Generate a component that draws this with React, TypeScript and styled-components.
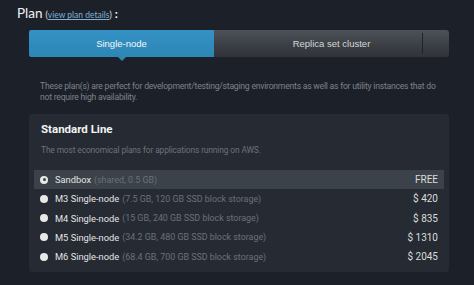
import React from "react";
import styled, { createGlobalStyle } from "styled-components";

const Global = createGlobalStyle`
  html, body { margin: 0; padding: 0; background: #1c2129; }
  body { width: 474px; height: 285px; overflow: hidden; font-family: Roboto, "Liberation Sans", sans-serif; }
`;

const Page = styled.div`
  display: flex;
  flex-direction: column;
  width: 474px;
  height: 285px;
  box-sizing: border-box;
  padding: 5px 25px 0 29px;
  background: #1c2129;
`;

const Header = styled.div`
  display: flex;
  align-items: baseline;
  margin-left: -12px;
  height: 18px;
  color: #f2f2f2;
  font-family: Lato, "Liberation Sans", sans-serif;
`;

const Title = styled.span`
  font-size: 13.5px;
  font-weight: 400;
  margin-right: 3px;
`;

const Small = styled.span`
  font-size: 8.5px;
  color: #e6e6e6;
`;

const Link = styled.a`
  color: #7fb2d6;
  text-decoration: underline;
  font-size: 8.5px;
`;

const Colon = styled.span`
  font-size: 12px;
  margin-left: 3px;
  font-weight: 700;
`;

const Tabs = styled.div`
  display: flex;
  margin-top: 7px;
  height: 27px;
  border-radius: 2px;
`;

const Tab = styled.div<{ $active?: boolean; $grow: number }>`
  position: relative;
  flex: ${(p) => p.$grow} 0 0;
  display: flex;
  align-items: center;
  justify-content: center;
  font-family: "Liberation Sans", Arial, sans-serif;
  font-size: 9.5px;
  color: ${(p) => (p.$active ? "#f4f8fb" : "#d4d6d8")};
  background: ${(p) =>
    p.$active
      ? "linear-gradient(#3592c4, #2c86b6)"
      : "linear-gradient(#4d5259, #3a3e44 60%, #30343a)"};
  border-radius: ${(p) => (p.$active ? "2px 0 0 2px" : "0 3px 3px 0")};
  ${(p) =>
    p.$active
      ? `
    &::after {
      content: "";
      position: absolute;
      left: 50%;
      bottom: -4px;
      margin-left: -4px;
      border-left: 4px solid transparent;
      border-right: 4px solid transparent;
      border-top: 4px solid #2c86b6;
    }`
      : `
    &::after {
      content: "";
      position: absolute;
      right: 26px;
      top: 3px;
      bottom: 3px;
      width: 1px;
      background: #1f2227;
    }`}
`;

const Description = styled.p`
  margin: 24px 0 0 11px;
  font-size: 8.6px;
  letter-spacing: -0.22px;
  line-height: 11px;
  color: #7c828a;
  white-space: nowrap;
`;

const Card = styled.div`
  margin-top: 11px;
  background: #262b33;
  border-radius: 3px;
  padding: 7px 5px 0 5px;
  height: 158px;
  box-sizing: border-box;
`;

const CardTitle = styled.div`
  font-size: 11.5px;
  font-weight: 700;
  color: #f4f4f4;
  margin-left: 7px;
  line-height: 16px;
`;

const CardSubtitle = styled.div`
  font-size: 8.4px;
  letter-spacing: -0.12px;
  color: #6c7279;
  margin: 8px 0 0 7px;
  line-height: 11px;
`;

const List = styled.div`
  margin-top: 14px;
  display: flex;
  flex-direction: column;
`;

const Row = styled.div<{ $selected?: boolean }>`
  display: flex;
  align-items: center;
  height: 19.25px;
  padding: 0 6px 0 6px;
  background: ${(p) => (p.$selected ? "#3b4249" : "transparent")};
  font-size: 9.3px;
`;

const Radio = styled.span<{ $checked?: boolean }>`
  width: 8px;
  height: 8px;
  border-radius: 50%;
  background: #e8e8e8;
  box-sizing: border-box;
  margin-right: 7px;
  display: flex;
  align-items: center;
  justify-content: center;
  &::after {
    content: "";
    width: 3px;
    height: 3px;
    border-radius: 50%;
    background: ${(p) => (p.$checked ? "#3b4249" : "transparent")};
  }
`;

const Name = styled.span`
  color: #e4e4e4;
`;

const Detail = styled.span`
  color: #6b7178;
  margin-left: 3px;
  font-size: 8.9px;
`;

const Price = styled.span`
  margin-left: auto;
  color: #dcdcdc;
  font-size: 10px;
`;

const plans = [
  { name: "Sandbox", detail: "(shared, 0.5 GB)", price: "FREE", selected: true },
  { name: "M3 Single-node", detail: "(7.5 GB, 120 GB SSD block storage)", price: "$ 420" },
  { name: "M4 Single-node", detail: "(15 GB, 240 GB SSD block storage)", price: "$ 835" },
  { name: "M5 Single-node", detail: "(34.2 GB, 480 GB SSD block storage)", price: "$ 1310" },
  { name: "M6 Single-node", detail: "(68.4 GB, 700 GB SSD block storage)", price: "$ 2045" },
];

export default function App() {
  return (
    <>
      <Global />
      <Page>
        <Header>
          <Title>Plan</Title>
          <Small>(</Small>
          <Link href="#">view plan details</Link>
          <Small>)</Small>
          <Colon>:</Colon>
        </Header>
        <Tabs>
          <Tab $active $grow={185}>Single-node</Tab>
          <Tab $grow={235}>Replica set cluster</Tab>
        </Tabs>
        <Description>
          These plan(s) are perfect for development/testing/staging environments as well as for utility instances that do
          <br />
          not require high availability.
        </Description>
        <Card>
          <CardTitle>Standard Line</CardTitle>
          <CardSubtitle>The most economical plans for applications running on AWS.</CardSubtitle>
          <List>
            {plans.map((p) => (
              <Row key={p.name} $selected={p.selected}>
                <Radio $checked={p.selected} />
                <Name>{p.name}</Name>
                <Detail>{p.detail}</Detail>
                <Price>{p.price}</Price>
              </Row>
            ))}
          </List>
        </Card>
      </Page>
    </>
  );
}
